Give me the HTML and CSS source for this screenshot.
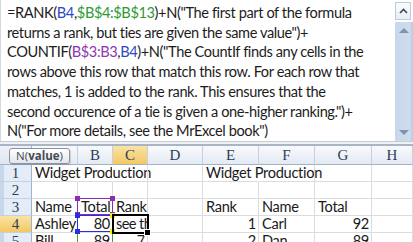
FILE: index.html
```html
<!DOCTYPE html>
<html>
<head>
<meta charset="utf-8">
<link rel="stylesheet" href="styles.css">
</head>
<body>
<div class="page">
  <div class="formula">
    <div class="ftext">
      <div class="ln">=RANK(<span class="fb">B4</span>,<span class="fg">$B$4:$B$13</span>)+N("The first part of the formula</div>
      <div class="ln">returns a rank, but ties are given the same value")+</div>
      <div class="ln">COUNTIF(<span class="fp">B$3:B3</span>,<span class="fb">B4</span>)+N("The CountIf finds any cells in the</div>
      <div class="ln">rows above this row that match this row. For each row that</div>
      <div class="ln">matches, 1 is added to the rank. This ensures that the</div>
      <div class="ln">second occurence of a tie is given a one-higher ranking.")+</div>
      <div class="ln">N("For more details, see the MrExcel book")</div>
    </div>
    <div class="vscroll">
      <div class="vbtn"><svg width="9" height="6" viewBox="0 0 9 6"><polyline points="1,5 4.5,1.5 8,5" fill="none" stroke="#3c4a5c" stroke-width="1.6"/></svg></div>
      <div class="vtrack">
        <svg width="10" height="6" viewBox="0 0 10 6"><polygon points="0,5 5,0 10,5" fill="#7f93ad"/></svg>
        <svg width="10" height="6" viewBox="0 0 10 6"><polygon points="0,0 10,0 5,5" fill="#7f93ad"/></svg>
      </div>
    </div>
  </div>
  <div class="sep"></div>
  <div class="sheet">
    <div class="ch corner"></div>
    <div class="ch"></div>
    <div class="ch">B</div>
    <div class="ch sel">C</div>
    <div class="ch">D</div>
    <div class="ch">E</div>
    <div class="ch">F</div>
    <div class="ch">G</div>
    <div class="ch">H</div>

    <div class="rh">1</div>
    <div class="c nob">Widget Production</div>
    <div class="c nob"></div>
    <div class="c"></div>
    <div class="c"></div>
    <div class="c nob">Widget Production</div>
    <div class="c"></div>
    <div class="c"></div>
    <div class="c"></div>

    <div class="rh">2</div>
    <div class="c"></div>
    <div class="c"></div>
    <div class="c"></div>
    <div class="c"></div>
    <div class="c"></div>
    <div class="c"></div>
    <div class="c"></div>
    <div class="c"></div>

    <div class="rh">3</div>
    <div class="c">Name</div>
    <div class="c ov">Total<span class="rng purple"><i class="q tl"></i><i class="q tr"></i><i class="q bl"></i><i class="q br"></i></span></div>
    <div class="c">Rank</div>
    <div class="c"></div>
    <div class="c">Rank</div>
    <div class="c">Name</div>
    <div class="c">Total</div>
    <div class="c"></div>

    <div class="rh sel">4</div>
    <div class="c">Ashley</div>
    <div class="c r ov">80<span class="rng green"></span><span class="rng blue"><i class="q tl"></i><i class="q tr y"></i><i class="q bl"></i><i class="q br y"></i></span></div>
    <div class="c ov clip"><span class="cliptext">see th</span><span class="active"><i class="handle"></i></span></div>
    <div class="c"></div>
    <div class="c r">1</div>
    <div class="c">Carl</div>
    <div class="c r">92</div>
    <div class="c"></div>

    <div class="rh">5</div>
    <div class="c">Bill</div>
    <div class="c r ov">89<span class="rng green"></span></div>
    <div class="c r">7</div>
    <div class="c"></div>
    <div class="c r">2</div>
    <div class="c">Dan</div>
    <div class="c r">89</div>
    <div class="c"></div>
  </div>
  <div class="tip">N(<b>value</b>)</div>
</div>
</body>
</html>
```
FILE: styles.css
```css
html, body {
  margin: 0;
  padding: 0;
  background: #ffffff;
}
.page {
  width: 413px;
  height: 242px;
  overflow: hidden;
  position: relative;
  font-family: Lato, "Liberation Sans", sans-serif;
}
.formula {
  display: flex;
  height: 141px;
  background: #ffffff;
  border-left: 1px solid #d3d8de;
  box-sizing: border-box;
}
.ftext {
  flex: 1;
  padding: 3px 0 0 6px;
  font-size: 14.6px;
  letter-spacing: -0.4px;
  line-height: 19.7px;
  color: #1c1c1c;
  overflow: hidden;
}
.ln {
  white-space: nowrap;
}
.fb { color: #3047c8; }
.fg { color: #2f9a36; }
.fp { color: #8f36b0; }
.vscroll {
  width: 18px;
  flex: none;
  display: flex;
  flex-direction: column;
  padding-top: 2px;
  box-sizing: border-box;
}
.vbtn {
  height: 18px;
  margin-right: 2px;
  background: linear-gradient(#fbfcfe, #e9eef5);
  border: 1px solid #bccadb;
  box-sizing: border-box;
  display: flex;
  align-items: center;
  justify-content: center;
}
.vtrack {
  flex: 1;
  margin-top: 2px;
  background: linear-gradient(90deg, #c7d7ec, #cfdcee 80%, #b9cbe2);
  display: flex;
  flex-direction: column;
  justify-content: space-between;
  align-items: center;
  padding: 6px 0 5px;
}
.sep {
  height: 5px;
  box-sizing: border-box;
  border-top: 1px solid #c4cbd4;
  border-bottom: 2px solid #a9b5c4;
  background: #eef1f5;
}
.sheet {
  display: grid;
  grid-template-columns: 32px 46px 35px 35px 55px 56px 56px 57px 41px;
  grid-template-rows: 19px repeat(5, 17px);
}
.ch {
  background: linear-gradient(#f8fafd, #e4eaf3);
  border-right: 1px solid #c5d1df;
  border-bottom: 1px solid #9fb3ca;
  box-sizing: border-box;
  font-family: "Liberation Serif", serif;
  font-size: 15px;
  color: #2c3e5a;
  text-align: center;
  line-height: 18px;
}
.ch.corner {
  background: linear-gradient(#eef2f8, #dfe6f0);
  border-right-color: #9fb3ca;
}
.ch.sel, .rh.sel {
  background: linear-gradient(#fae3a6, #f3c862);
  color: #2c3e5a;
}
.rh {
  background: linear-gradient(90deg, #c9d7ea 0, #c9d7ea 4px, #e4ecf7 4px, #e4ecf7);
  border-right: 1px solid #9fb3ca;
  border-bottom: 1px solid #c5d1df;
  box-sizing: border-box;
  font-family: "Liberation Serif", serif;
  font-size: 15px;
  color: #2c3e5a;
  text-align: center;
  line-height: 16px;
}
.c {
  border-right: 1px solid #dadcdd;
  border-bottom: 1px solid #dadcdd;
  box-sizing: border-box;
  font-size: 14.6px;
  letter-spacing: -0.3px;
  line-height: 16px;
  color: #1a1a1a;
  padding: 0 2px 0 3px;
  white-space: nowrap;
}
.c.nob {
  border-right-color: #ffffff;
}
.c.r {
  text-align: right;
}
.c.ov {
  position: relative;
}
.c.clip {
  padding-right: 0;
}
.c.clip .cliptext {
  display: block;
  overflow: hidden;
  letter-spacing: -0.6px;
}
.rng {
  position: absolute;
  left: -1px;
  top: -1px;
  right: -1px;
  bottom: 0;
  border: 1px solid;
  pointer-events: none;
}
.rng.purple { border-color: #8a2db0; z-index: 3; }
.rng.blue { border-color: #2b2de0; border-right-color: #f2f000; z-index: 4; }
.rng.green {
  border-color: #3aa43a;
  border-top: none;
  border-bottom: none;
  bottom: -40px;
  z-index: 2;
}
.q {
  position: absolute;
  width: 5px;
  height: 5px;
}
.purple .q { background: #8a2db0; }
.blue .q { background: #2b2de0; }
.blue .q.y { background: #f2f000; }
.q.tl { left: -3px; top: -3px; }
.q.tr { right: -3px; top: -3px; }
.q.bl { left: -3px; bottom: -3px; }
.q.br { right: -3px; bottom: -3px; }
.active {
  position: absolute;
  left: -1px;
  top: -2px;
  right: -2px;
  bottom: -2px;
  border: 2px solid #000000;
  z-index: 5;
}
.handle {
  position: absolute;
  right: -4px;
  bottom: -4px;
  width: 5px;
  height: 5px;
  background: #000000;
  border: 1px solid #ffffff;
}
.tip {
  position: absolute;
  left: 9px;
  top: 148px;
  width: 61px;
  height: 16px;
  box-sizing: border-box;
  border: 1px solid #8d929b;
  border-radius: 3px;
  background: linear-gradient(#ffffff, #e3e6ee);
  box-shadow: 1px 1px 1px rgba(0,0,0,0.15);
  font-family: "Open Sans", sans-serif;
  font-size: 11.5px;
  line-height: 13px;
  color: #474b52;
  text-align: center;
  z-index: 10;
}
.tip b {
  font-weight: 700;
}
```
